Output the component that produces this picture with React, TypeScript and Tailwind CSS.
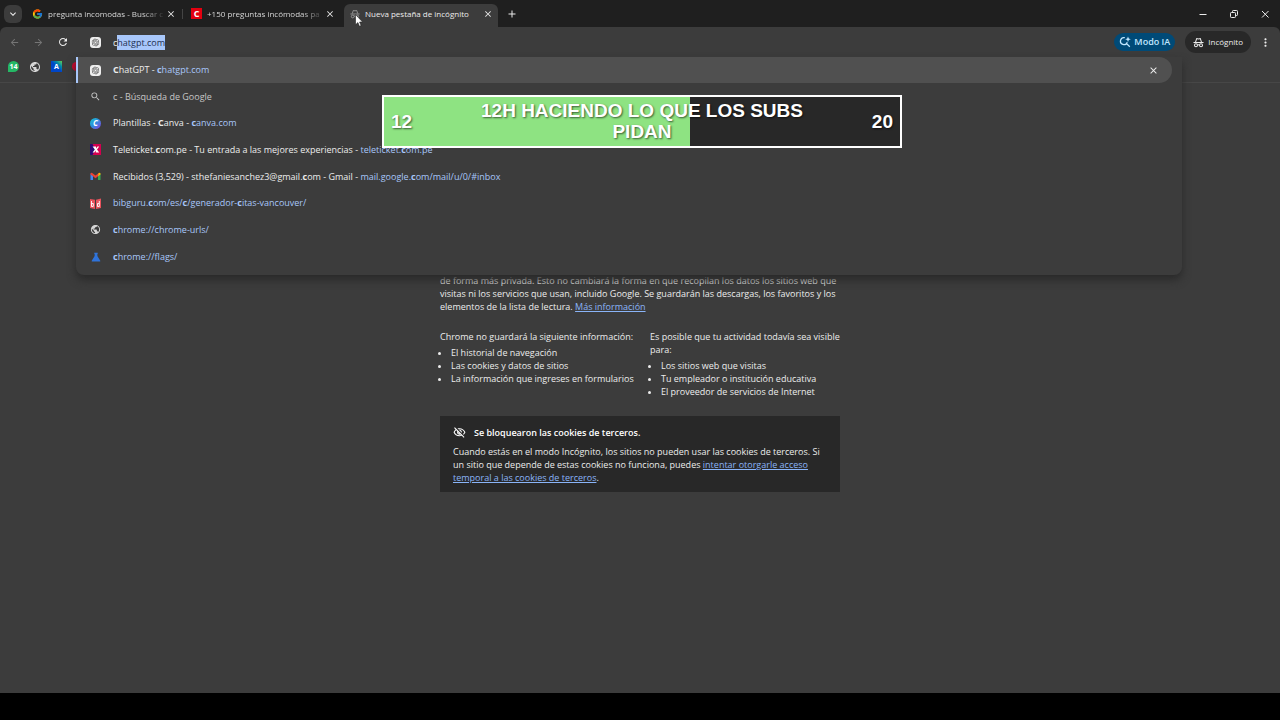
import { useEffect, useRef, type ReactNode } from 'react'
import { FcGoogle } from 'react-icons/fc'
import {
  MdAdd,
  MdArrowBack,
  MdArrowForward,
  MdClose,
  MdKeyboardArrowDown,
  MdMoreVert,
  MdOutlineVisibilityOff,
  MdPublic,
  MdRefresh,
  MdSearch,
} from 'react-icons/md'
import { RiOpenaiFill } from 'react-icons/ri'

type Suggestion = {
  icon: ReactNode
  title?: ReactNode
  url?: ReactNode
}

const suggestions: Suggestion[] = [
  {
    icon: <MdSearch className="size-[11px] text-[#c7c7c7]" />,
    title: <span className="text-[#c7c7c7]">c - Búsqueda de Google</span>,
  },
  {
    icon: <CanvaIcon />,
    title: <>Plantillas - <b>C</b>anva</>,
    url: <><b>c</b>anva.com</>,
  },
  {
    icon: <TeleticketIcon />,
    title: <>Teleticket.<b>c</b>om.pe - Tu entrada a las mejores experiencias</>,
    url: <>teleticket.<b>c</b>om.pe</>,
  },
  {
    icon: <GmailIcon />,
    title: <>Recibidos (3,529) - sthefaniesanchez3@gmail.<b>c</b>om - Gmail</>,
    url: <>mail.google.<b>c</b>om/mail/u/0/#inbox</>,
  },
  {
    icon: <BibguruIcon />,
    url: <>bibguru.<b>c</b>om/es/<b>c</b>/generador-<b>c</b>itas-vancouver/</>,
  },
  {
    icon: <MdPublic className="size-[11px] text-[#d6d6d6]" />,
    url: <><b>c</b>hrome://chrome-urls/</>,
  },
  {
    icon: <FlaskIcon />,
    url: <><b>c</b>hrome://flags/</>,
  },
]

export default function App() {
  return (
    <div className="relative flex h-screen flex-col overflow-hidden bg-black font-['Open_Sans','Noto_Sans',sans-serif] text-[9px] text-[#ececec]">
      <div className="flex min-h-0 flex-1 flex-col bg-[#1f1f1f]">
        <TabStrip />
        <div className="flex min-h-0 flex-1 flex-col rounded-t-md bg-[#3c3c3c]">
          <div className="relative z-10">
            <Toolbar />
            <BookmarksBar />
            <SuggestionList />
          </div>
          <IncognitoPage />
        </div>
      </div>
      <div className="h-[27px] shrink-0" />
      <GoalBar />
      <Cursor />
    </div>
  )
}

function TabStrip() {
  return (
    <header className="flex h-[27px] shrink-0 items-center">
      <button aria-label="Buscar pestañas" className="ml-1 mr-1 flex size-[18px] items-center justify-center rounded-md bg-[#3c3c3c]">
        <MdKeyboardArrowDown className="size-3" />
      </button>
      <div role="tablist" className="flex h-full text-[8px]">
        <Tab icon={<FcGoogle className="size-3" />} title="pregunta incomodas - Buscar c" divider />
        <Tab
          icon={<span className="flex size-[11px] items-center justify-center bg-[#e3000f] text-[9px] font-bold leading-none text-white">C</span>}
          title="+150 preguntas incómodas pa"
        />
        <Tab icon={<IncognitoIcon className="size-[10px] text-[#9a9a9a]" />} title="Nueva pestaña de incógnito" active />
      </div>
      <button aria-label="Nueva pestaña" className="ml-2">
        <MdAdd className="size-3" />
      </button>
      <div className="ml-auto flex items-center gap-[21px] pr-[10px]">
        <button aria-label="Minimizar">
          <svg viewBox="0 0 10 10" className="size-[10px]" fill="none" stroke="currentColor">
            <path d="M1.500 5.500h7" />
          </svg>
        </button>
        <button aria-label="Restaurar">
          <svg viewBox="0 0 10 10" className="size-[10px]" fill="none" stroke="currentColor">
            <rect x="1.500" y="3.500" width="5" height="5" rx="0.8" />
            <path d="M3.500 3.300V2.300q0-.8.8-.8h3.400q.8 0 .8.8v3.400q0 .8-.8.8h-1" />
          </svg>
        </button>
        <button aria-label="Cerrar">
          <svg viewBox="0 0 10 10" className="size-[10px]" fill="none" stroke="currentColor">
            <path d="M2 2l6.500 6.500M8.500 2l-6.500 6.500" />
          </svg>
        </button>
      </div>
    </header>
  )
}

function Tab({ icon, title, active, divider }: { icon: ReactNode; title: string; active?: boolean; divider?: boolean }) {
  return (
    <div
      role="tab"
      aria-selected={!!active}
      className={
        active
          ? 'mt-1 flex w-[154px] items-center rounded-t-md bg-[#3c3c3c] pb-1 pl-[5px] pr-[5px]'
          : 'relative flex w-[159px] items-center pl-[6px] pr-[9px]'
      }
    >
      <span className="flex w-[11px] shrink-0 justify-center">{icon}</span>
      <span
        className={
          active
            ? 'ml-[5px] flex-1 whitespace-nowrap'
            : 'ml-[5px] flex-1 whitespace-nowrap text-[#d6d6d6] [mask-image:linear-gradient(to_right,black_80%,transparent)]'
        }
      >
        {title}
      </span>
      <button aria-label="Cerrar pestaña">
        <MdClose className="size-[10px]" />
      </button>
      {divider && <span className="absolute right-[2px] h-[10px] w-px bg-[#444]" />}
    </div>
  )
}

function Toolbar() {
  const inputRef = useRef<HTMLInputElement>(null)

  // keep the autocompleted part selected, as the omnibox does
  useEffect(() => {
    inputRef.current?.focus()
    inputRef.current?.setSelectionRange(1, 11)
  }, [])

  return (
    <div className="flex h-[30px] items-center">
      <div className="flex w-[76px] items-center gap-[13px] pl-[9px]">
        <button aria-label="Atrás" className="text-[#757575]"><MdArrowBack className="size-[11px]" /></button>
        <button aria-label="Adelante" className="text-[#757575]"><MdArrowForward className="size-[11px]" /></button>
        <button aria-label="Volver a cargar"><MdRefresh className="size-3" /></button>
      </div>
      <div className="flex flex-1 items-center pl-[14px]">
        <ChatGptIcon />
        <input
          ref={inputRef}
          aria-label="Barra de direcciones"
          defaultValue="chatgpt.com"
          className="ml-3 h-[15px] flex-1 bg-transparent text-[9px] leading-[15px] outline-none selection:bg-[#a8c7fa] selection:text-[#1f2f50]"
        />
        <button className="flex h-[18px] items-center gap-[3px] rounded-full bg-[#004a77] px-[5px] font-semibold text-[#c2e7ff]">
          <AiSearchIcon />
          Modo IA
        </button>
      </div>
      <button className="ml-[10px] flex h-[22px] items-center gap-1 rounded-full bg-[#282828] px-2 text-[8px]">
        <IncognitoIcon className="size-[11px]" />
        Incógnito
      </button>
      <button aria-label="Menú" className="ml-2 mr-2">
        <MdMoreVert className="size-[13px]" />
      </button>
    </div>
  )
}

function BookmarksBar() {
  return (
    <nav className="flex h-[26px] items-center gap-[10px] border-b border-[#474747] pb-[6px] pl-2">
      <a href="#whatsapp" aria-label="WhatsApp">
        <span className="flex size-[11px] items-center justify-center rounded-full rounded-bl-none bg-[#25b865] text-[7px] font-bold leading-none text-white">14</span>
      </a>
      <a href="#web" aria-label="Web"><MdPublic className="size-3 text-[#d6d6d6]" /></a>
      <a href="#a" aria-label="A">
        <span className="flex size-[11px] items-center justify-center bg-linear-to-tr from-[#0046c8] from-50% to-[#5fd03a] text-[7px] font-bold leading-none text-white">A</span>
      </a>
      <a href="#rojo" aria-label="Marcador"><span className="block size-[9px] rounded-full bg-[#d8002e]" /></a>
    </nav>
  )
}

function SuggestionList() {
  return (
    <div className="absolute left-[76px] right-[98px] top-[30px] rounded-b-lg bg-[#3c3c3c] pb-[5px] shadow-[0_5px_8px_#2a2a2a]">
      <div className="mr-[10px] flex h-[26px] items-center rounded-r-full border-l-2 border-[#a8c7fa] bg-[#505050] pl-3 pr-[13px]">
        <ChatGptIcon />
        <a href="#chatgpt" className="ml-3 flex-1">
          <b>C</b>hatGPT - <span className="text-[#a8c7fa]"><b>c</b>hatgpt.com</span>
        </a>
        <button aria-label="Quitar sugerencia"><MdClose className="size-[11px]" /></button>
      </div>
      <ul className="flex h-[187px] flex-col">
        {suggestions.map((s, i) => (
          <li key={i} className="flex flex-1 items-center gap-3 pl-[14px]">
            <span className="flex w-[11px] justify-center">{s.icon}</span>
            <a href="#sugerencia" className="whitespace-nowrap">
              {s.title}
              {s.title && s.url && ' - '}
              {s.url && <span className="text-[#a8c7fa]">{s.url}</span>}
            </a>
          </li>
        ))}
      </ul>
    </div>
  )
}

function IncognitoPage() {
  return (
    <main className="mx-auto w-[400px] pt-[191px] leading-[13px]">
      <p className="whitespace-nowrap">
        de forma más privada. Esto no cambiará la forma en que recopilan los datos los sitios web que
        <br />
        visitas ni los servicios que usan, incluido Google. Se guardarán las descargas, los favoritos y los
        <br />
        elementos de la lista de lectura.{' '}
        <a href="#info" className="text-[#8ab4f8] underline">Más información</a>
      </p>
      <div className="mt-[17px] grid grid-cols-2 gap-5 whitespace-nowrap">
        <section>
          <p>Chrome <span className="font-medium">no guardará</span> la siguiente información:</p>
          <ul className="mt-[3px] list-disc pl-[11px]">
            <li>El historial de navegación</li>
            <li>Las cookies y datos de sitios</li>
            <li>La información que ingreses en formularios</li>
          </ul>
        </section>
        <section>
          <p>
            Es posible que tu actividad <span className="font-medium">todavía sea visible</span>
            <br />
            para:
          </p>
          <ul className="mt-[3px] list-disc pl-[11px]">
            <li>Los sitios web que visitas</li>
            <li>Tu empleador o institución educativa</li>
            <li>El proveedor de servicios de Internet</li>
          </ul>
        </section>
      </div>
      <section className="mt-[18px] bg-[#282828] px-[13px] pb-2 pt-[10px]">
        <h2 className="flex items-center gap-2 font-semibold text-white">
          <MdOutlineVisibilityOff className="size-[13px]" />
          Se bloquearon las cookies de terceros.
        </h2>
        <p className="mt-[6px] whitespace-nowrap">
          Cuando estás en el modo Incógnito, los sitios no pueden usar las cookies de terceros. Si
          <br />
          un sitio que depende de estas cookies no funciona, puedes{' '}
          <a href="#cookies" className="text-[#8ab4f8] underline">
            intentar otorgarle acceso
            <br />
            temporal a las cookies de terceros
          </a>
          .
        </p>
      </section>
    </main>
  )
}

function GoalBar() {
  const progress = 59.3
  return (
    <div className="absolute left-[382px] top-[95px] z-20 h-[53px] w-[520px] border-2 border-white bg-[#282828] font-['Liberation_Sans',Arial,sans-serif] text-[19px] font-bold leading-[21px] text-white [text-shadow:1px_1px_2px_#0009]">
      <div className="h-full bg-[#8ee382]" style={{ width: `${progress}%` }} />
      <div className="absolute inset-0 flex items-center justify-between px-[7px]">
        <span>12</span>
        <span className="w-[350px] pb-[2px] text-center">12H HACIENDO LO QUE LOS SUBS PIDAN</span>
        <span>20</span>
      </div>
    </div>
  )
}

function Cursor() {
  return (
    <svg viewBox="0 0 8 13" className="absolute left-[355px] top-[14px] z-30 h-[13px] w-2">
      <path d="M.5.5v10.300l2.400-2.200 1.500 3.700 1.700-.7-1.500-3.600h3z" fill="#fff" stroke="#222" strokeWidth=".6" />
    </svg>
  )
}

function AiSearchIcon() {
  return (
    <svg viewBox="0 0 12 12" className="size-3" fill="none" stroke="currentColor" strokeWidth="1.300">
      <path d="M5.800 1.700A3.500 3.500 0 1 0 8.300 6.300M7.600 7.600l3.200 3.200" />
      <path d="M9 .4l.8 2 2 .8-2 .8-.8 2-.8-2-2-.8 2-.8z" fill="currentColor" stroke="none" />
    </svg>
  )
}

function ChatGptIcon() {
  return (
    <span className="flex size-[11px] shrink-0 items-center justify-center rounded-[3px] bg-[#eee] text-[#444]">
      <RiOpenaiFill className="size-[9px]" />
    </span>
  )
}

function IncognitoIcon({ className }: { className?: string }) {
  return (
    <svg viewBox="0 0 24 24" className={className} fill="none" stroke="currentColor" strokeWidth="2.200">
      <path d="M1 12h22M5.500 11L8 3.500l4 1 4-1L18.500 11" />
      <circle cx="6.500" cy="18" r="3.300" />
      <circle cx="17.500" cy="18" r="3.300" />
      <path d="M9.800 17.500q2.200-1.500 4.400 0" />
    </svg>
  )
}

function CanvaIcon() {
  return (
    <span className="flex size-[11px] items-center justify-center rounded-full bg-linear-to-br from-[#10c5cc] via-[#2f8be0] to-[#7430df] text-[8px] font-bold italic leading-none text-white">
      C
    </span>
  )
}

function TeleticketIcon() {
  return (
    <svg viewBox="0 0 11 11" className="size-[11px]">
      <rect width="11" height="11" fill="#d4004f" />
      <path d="M0 0h2.500l3 5.500-3 5.500H0z" fill="#2b0a72" />
      <path d="M2.600 2.600l2.200 2.900-2.200 2.900h1.700l1.500-2V8.400h.2l3.200 0-2.200-2.900 2.200-2.900H7.500L6 4.600V2.600z" fill="#fff" />
    </svg>
  )
}

function GmailIcon() {
  return (
    <svg viewBox="0 0 11 9" className="h-[9px] w-[11px]">
      <path d="M.5 1.500v6.500H3V3.500z" fill="#4285f4" />
      <path d="M8 3.500V8h2.500V1.500z" fill="#34a853" />
      <path d="M8 1.500v2.700l2.500-1.800V1.500Q10 .3 8.800 1z" fill="#fbbc04" />
      <path d="M.5 2.400V1.500Q1 .3 2.200 1l3.300 2.500L8.800 1 8 4.200 5.500 6.200 3 4.200z" fill="#ea4335" />
    </svg>
  )
}

function BibguruIcon() {
  return (
    <svg viewBox="0 0 11 11" className="size-[11px]">
      <path d="M0 1l5 .8V11L0 10zM6 1.800L8 1.300 11 .5V10l-5 1z" fill="#e8525c" />
      <path d="M1.500 3v5.500h2M1.500 5.500h1.800V8M9.300 3v5.500H7.500V5.500h1.500" fill="none" stroke="#fff" strokeWidth=".9" />
    </svg>
  )
}

function FlaskIcon() {
  return (
    <svg viewBox="0 0 11 11" className="size-[10px]">
      <path d="M3.500.8h4v1H7v2.500l3.200 5.200q.3 1-.7 1h-8q-1 0-.7-1L4 4.300V1.800h-.5z" fill="#2f73da" />
    </svg>
  )
}
